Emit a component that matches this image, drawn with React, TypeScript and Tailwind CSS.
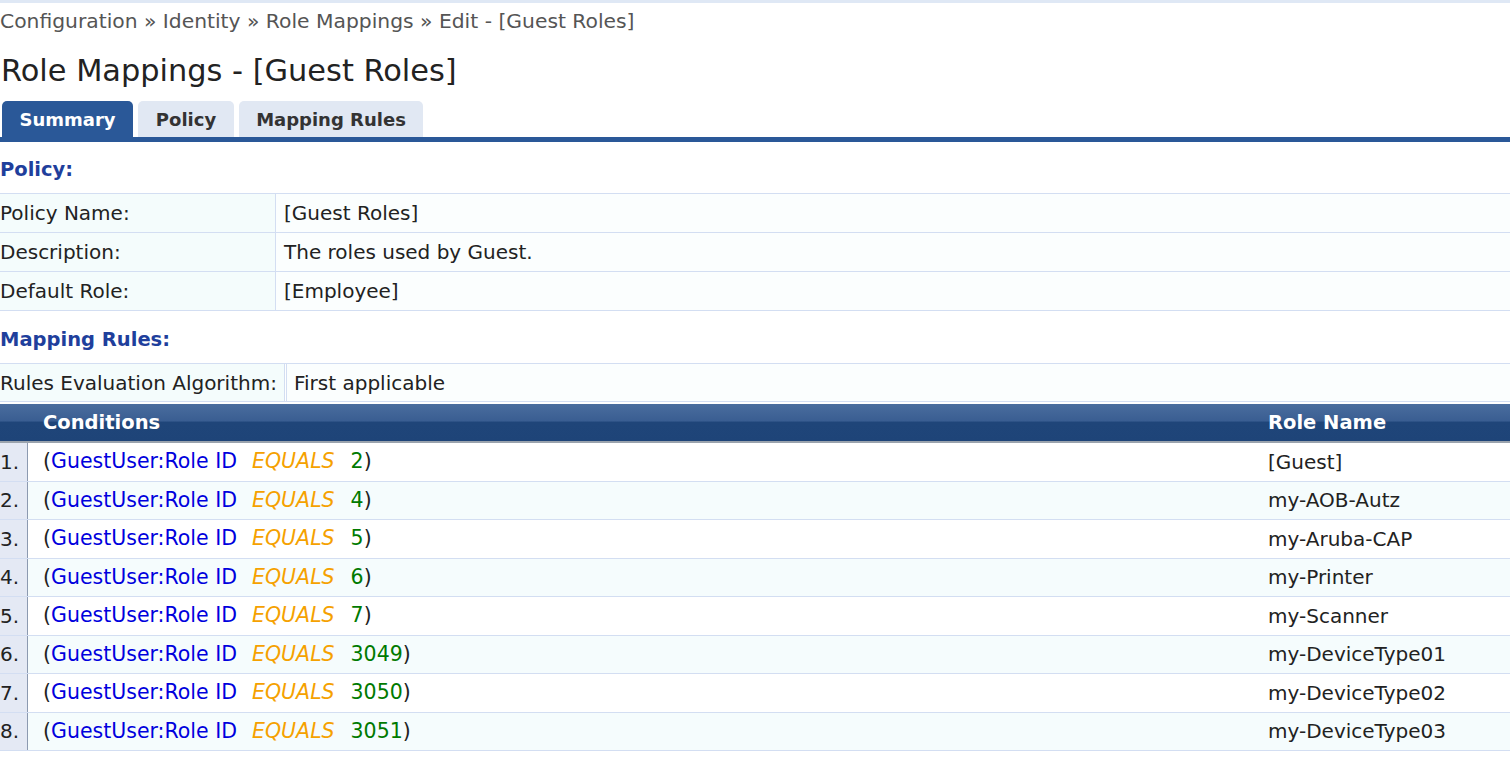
const font = { fontFamily: '"DejaVu Sans", Tahoma, Verdana, sans-serif' };

const policyRows = [
    { label: "Policy Name:", value: "[Guest Roles]" },
    { label: "Description:", value: "The roles used by Guest." },
    { label: "Default Role:", value: "[Employee]" },
];

const rules = [
    { value: "2", role: "[Guest]" },
    { value: "4", role: "my-AOB-Autz" },
    { value: "5", role: "my-Aruba-CAP" },
    { value: "6", role: "my-Printer" },
    { value: "7", role: "my-Scanner" },
    { value: "3049", role: "my-DeviceType01" },
    { value: "3050", role: "my-DeviceType02" },
    { value: "3051", role: "my-DeviceType03" },
];

export default function App() {
    return (
        <div className="w-[1510px] h-[783px] bg-white text-[#222] overflow-hidden" style={font}>
            <div className="h-[3px] bg-[#dfe8f5]" />

            {/* breadcrumb */}
            <div className="pt-[5px] h-[38px] text-[20.3px] leading-[26px] text-[#555]">
                Configuration » Identity » Role Mappings » Edit - [Guest Roles]
            </div>

            {/* title */}
            <h1 className="h-[60px] pt-[10px] pl-[1px] text-[30.4px] leading-[40px] text-[#222]">
                Role Mappings - [Guest Roles]
            </h1>

            {/* tabs */}
            <div className="flex items-end gap-[5px] pl-[2px] h-[36px]">
                <div className="w-[131px] h-[36px] rounded-t-[5px] bg-[#2a5898] text-white font-bold text-[18px] flex items-center justify-center">
                    Summary
                </div>
                <div className="w-[96px] h-[36px] rounded-t-[5px] bg-[#e1e8f3] text-[#333] font-bold text-[18px] flex items-center justify-center">
                    Policy
                </div>
                <div className="w-[184px] h-[36px] rounded-t-[5px] bg-[#e1e8f3] text-[#333] font-bold text-[18px] flex items-center justify-center">
                    Mapping Rules
                </div>
            </div>
            <div className="h-[5px] bg-[#2a5898]" />

            {/* policy section */}
            <div className="h-[51px] pt-[5px] flex items-center text-[19.5px] font-bold text-[#1f3f9c]">Policy:</div>
            <div className="border-t border-[#d3def2]">
                {policyRows.map((r) => (
                    <div key={r.label} className="flex h-[39px] border-b border-[#d3def2] text-[20px]">
                        <div className="w-[276px] border-r border-[#d3def2] bg-[#f4fcfc] flex items-center">{r.label}</div>
                        <div className="flex-1 bg-[#fbfefe] flex items-center pl-[8px]">{r.value}</div>
                    </div>
                ))}
            </div>

            {/* mapping rules */}
            <div className="h-[52px] pt-[6px] flex items-center text-[19.5px] font-bold text-[#1f3f9c]">Mapping Rules:</div>
            <div className="flex h-[39px] border-y border-[#d3def2] text-[20px]">
                <div className="w-[285px] border-r border-[#d3def2] bg-[#f4fcfc] flex items-center">Rules Evaluation Algorithm:</div>
                <div className="flex-1 bg-[#fbfefe] flex items-center pl-[7px] border-l border-[#d3def2] ml-[1px]">First applicable</div>
            </div>

            {/* rules table */}
            <div className="mt-[2px]">
                <div className="flex h-[39px] border-b-2 border-[#9aa3ad] text-white font-bold text-[19.5px] bg-[linear-gradient(to_bottom,#4a6d9e_0%,#3a5e92_45%,#1f4579_50%,#1e4478_100%)]">
                    <div className="w-[28px]" />
                    <div className="flex-1 flex items-center pl-[15px]">Conditions</div>
                    <div className="w-[242px] flex items-center">Role Name</div>
                </div>
                {rules.map((r, i) => (
                    <div
                        key={i}
                        className={`flex h-[38.5px] border-b border-[#d3def2] text-[20px] ${i % 2 === 1 ? "bg-[#f5fcfd]" : "bg-white"}`}
                    >
                        <div className="w-[28px] bg-[#e4e9f4] border-r border-[#8c9ab0] flex items-center">{i + 1}.</div>
                        <div className="flex-1 flex items-center pl-[15px] whitespace-pre text-[20.5px]">
                            <span>(</span>
                            <span className="text-[#0000dd]">GuestUser:Role ID</span>
                            <span className="w-[15px]" />
                            <span className="italic text-[#f5a100]">EQUALS</span>
                            <span className="w-[16px]" />
                            <span className="text-[#007a00]">{r.value}</span>
                            <span>)</span>
                        </div>
                        <div className="w-[242px] flex items-center">{r.role}</div>
                    </div>
                ))}
            </div>
        </div>
    );
}
